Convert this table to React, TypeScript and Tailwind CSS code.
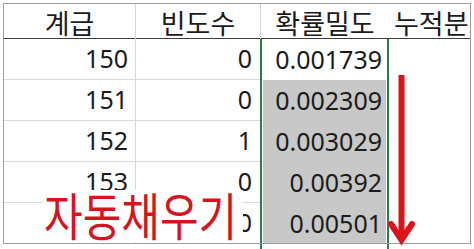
import React from 'react';

const rows = [
  { cls: '150', freq: '0', dens: '0.001739', sel: false },
  { cls: '151', freq: '0', dens: '0.002309', sel: true },
  { cls: '152', freq: '1', dens: '0.003029', sel: true },
  { cls: '153', freq: '0', dens: '0.00392', sel: true },
  { cls: '154', freq: '0', dens: '0.00501', sel: true },
];

const font = { fontFamily: '"Noto Sans", "Noto Sans CJK KR", sans-serif' };

const App: React.FC = () => {
  return (
    <div className="relative w-[474px] h-[249px] bg-white overflow-hidden" style={font}>
      <div className="ml-[3px] mt-[3px] w-[468px] h-[241px] border border-[#9c9c9c] overflow-hidden text-[#1b1b1b]">
        <div className="grid grid-cols-[131px_125px_129px_1fr] h-[35px] border-b border-[#3c3c3c] text-[27px]">
          <div className="flex items-center justify-center">계급</div>
          <div className="flex items-center justify-center border-l border-[#d4d4d4]">빈도수</div>
          <div className="flex items-center justify-center border-l border-[#d4d4d4]">확률밀도</div>
          <div className="flex items-center pl-[5px] whitespace-nowrap overflow-hidden">누적분포</div>
        </div>
        {rows.map((r) => (
          <div key={r.cls} className="grid grid-cols-[131px_125px_129px_1fr] h-[41px] text-[25px]">
            <div className="flex items-center justify-end pr-[7px] border-b border-[#d9d9d9]">{r.cls}</div>
            <div className="flex items-center justify-end pr-[8px] border-l border-b border-[#d9d9d9]">{r.freq}</div>
            <div className="border-x-2 border-[#2f7a50]">
              <div
                className={
                  r.sel
                    ? 'h-full flex items-center justify-end pr-[4px] ml-[1px] mr-[1px] bg-[#c8c8c8]'
                    : 'h-full flex items-center justify-end pr-[5px]'
                }
              >
                {r.dens}
              </div>
            </div>
            <div />
          </div>
        ))}
      </div>
      <div className="absolute left-[260px] top-[244px] w-[129px] h-[5px] border-x-2 border-[#2f7a50]" />

      <div className="absolute left-[42px] top-[190px] h-[52px] w-[201px] bg-white flex items-center pl-[2px] overflow-hidden">
        <span className="block text-[42px] leading-none text-[#d5151e] whitespace-nowrap scale-y-[1.22] origin-center">
          자동채우기
        </span>
      </div>

      <svg className="absolute left-[388px] top-[74px]" width="28" height="172" viewBox="0 0 28 172">
        <line x1="13.5" y1="1" x2="13.5" y2="164" stroke="#dc1418" strokeWidth="6" />
        <polyline points="3,150 13.5,166 24,150" fill="none" stroke="#dc1418" strokeWidth="6" strokeLinecap="round" />
      </svg>
    </div>
  );
};

export default App;
